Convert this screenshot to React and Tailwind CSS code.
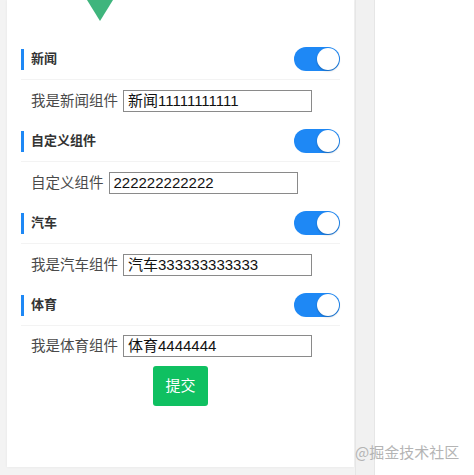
import React from "react";

const font = "font-['Liberation_Sans','Noto_Sans_CJK_SC',sans-serif]";

function Toggle() {
  return (
    <div className="relative w-[46px] h-[24px] rounded-full bg-[#1e88f5] shrink-0">
      <div className="absolute right-[1px] top-[1px] w-[22px] h-[22px] rounded-full bg-white shadow-[0_1px_2px_rgba(0,0,0,0.25)]" />
    </div>
  );
}

function Section({ title, label, value, last }) {
  return (
    <div>
      <div className="flex items-center justify-between py-[8px] border-b border-[#f3f3f3]">
        <div className="flex items-center">
          <div className="w-[3px] h-[21px] bg-[#1e88f5]" />
          <span className="ml-[7px] text-[13px] leading-[20px] font-semibold text-[#333]">{title}</span>
        </div>
        <Toggle />
      </div>
      <div className={`flex items-center pl-[10px] ${last ? "h-[40px]" : "h-[41px]"}`}>
        <span className="text-[14.5px] leading-[20px] text-[#4a4a4a] whitespace-nowrap">{label}</span>
        <div className="ml-[5px] w-[189px] h-[22px] border border-[#8a8a8a] flex items-center px-[4px] text-[15px] leading-[20px] text-[#111] overflow-hidden whitespace-nowrap">
          {value}
        </div>
      </div>
    </div>
  );
}

export default function App() {
  return (
    <div className={`relative w-[474px] h-[475px] bg-white ${font}`}>
      <div className="flex w-[375px] h-[475px] bg-[#f3f3f3]">
        <div className="w-[355px] pl-[7px] pr-[1px] pb-[8px]">
          <div className="h-full bg-white shadow-[0_0_3px_rgba(0,0,0,0.06)] px-[14px]">
            <div className="h-[21px] flex justify-start">
              <svg width="26" height="21" viewBox="0 0 26 21" className="ml-[66px]">
                <polygon points="0,0 26,0 13,21" fill="#3fb57d" />
              </svg>
            </div>
            <div className="h-[18px]" />
            <Section title="新闻" label="我是新闻组件" value="新闻11111111111" />
            <Section title="自定义组件" label="自定义组件" value="222222222222" />
            <Section title="汽车" label="我是汽车组件" value="汽车333333333333" />
            <Section title="体育" label="我是体育组件" value="体育4444444" last />
            <div className="flex justify-center">
              <button className="w-[55px] h-[40px] bg-[#0fc061] rounded-[3px] text-white text-[15px] leading-[20px]">
                提交
              </button>
            </div>
          </div>
        </div>
        <div className="w-[20px] h-full bg-[#f1f1f1] border-l border-r border-[#e6e6e6]" />
      </div>
      <div className="absolute left-[355px] top-[442px] text-[15px] leading-[20px] text-[#b4b4b4] font-['Noto_Sans_CJK_SC',sans-serif]">
        @掘金技术社区
      </div>
    </div>
  );
}
